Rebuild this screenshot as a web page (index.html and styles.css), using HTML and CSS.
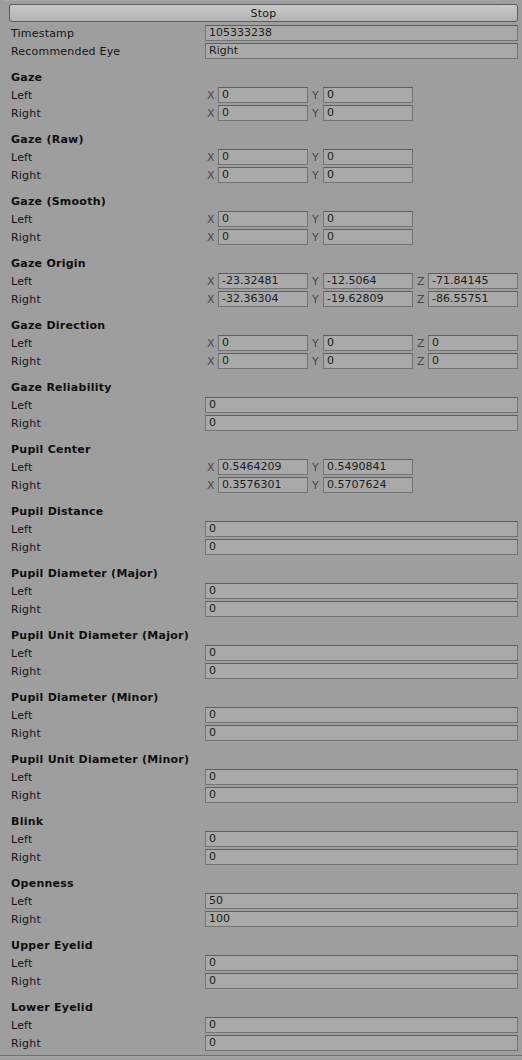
FILE: index.html
```html
<!DOCTYPE html>
<html lang="en">
<head>
    <meta charset="UTF-8">
    <title>Eye Tracking Data</title>
    <link rel="stylesheet" href="styles.css">
</head>
<body>
    <div class="inspector">
        <div class="top-strip"></div>
        <button class="stop-btn">Stop</button>

        <div class="row">
            <span class="label">Timestamp</span>
            <div class="field">105333238</div>
        </div>
        <div class="row">
            <span class="label">Recommended Eye</span>
            <div class="field">Right</div>
        </div>

        <div class="section">
            <div class="row header">Gaze</div>
            <div class="row">
                <span class="label">Left</span>
                <div class="vec">
                    <div class="comp"><span class="axis">X</span><div class="field">0</div></div>
                    <div class="comp"><span class="axis">Y</span><div class="field">0</div></div>
                </div>
            </div>
            <div class="row">
                <span class="label">Right</span>
                <div class="vec">
                    <div class="comp"><span class="axis">X</span><div class="field">0</div></div>
                    <div class="comp"><span class="axis">Y</span><div class="field">0</div></div>
                </div>
            </div>
        </div>

        <div class="section">
            <div class="row header">Gaze (Raw)</div>
            <div class="row">
                <span class="label">Left</span>
                <div class="vec">
                    <div class="comp"><span class="axis">X</span><div class="field">0</div></div>
                    <div class="comp"><span class="axis">Y</span><div class="field">0</div></div>
                </div>
            </div>
            <div class="row">
                <span class="label">Right</span>
                <div class="vec">
                    <div class="comp"><span class="axis">X</span><div class="field">0</div></div>
                    <div class="comp"><span class="axis">Y</span><div class="field">0</div></div>
                </div>
            </div>
        </div>

        <div class="section">
            <div class="row header">Gaze (Smooth)</div>
            <div class="row">
                <span class="label">Left</span>
                <div class="vec">
                    <div class="comp"><span class="axis">X</span><div class="field">0</div></div>
                    <div class="comp"><span class="axis">Y</span><div class="field">0</div></div>
                </div>
            </div>
            <div class="row">
                <span class="label">Right</span>
                <div class="vec">
                    <div class="comp"><span class="axis">X</span><div class="field">0</div></div>
                    <div class="comp"><span class="axis">Y</span><div class="field">0</div></div>
                </div>
            </div>
        </div>

        <div class="section">
            <div class="row header">Gaze Origin</div>
            <div class="row">
                <span class="label">Left</span>
                <div class="vec">
                    <div class="comp"><span class="axis">X</span><div class="field">-23.32481</div></div>
                    <div class="comp"><span class="axis">Y</span><div class="field">-12.5064</div></div>
                    <div class="comp"><span class="axis">Z</span><div class="field">-71.84145</div></div>
                </div>
            </div>
            <div class="row">
                <span class="label">Right</span>
                <div class="vec">
                    <div class="comp"><span class="axis">X</span><div class="field">-32.36304</div></div>
                    <div class="comp"><span class="axis">Y</span><div class="field">-19.62809</div></div>
                    <div class="comp"><span class="axis">Z</span><div class="field">-86.55751</div></div>
                </div>
            </div>
        </div>

        <div class="section">
            <div class="row header">Gaze Direction</div>
            <div class="row">
                <span class="label">Left</span>
                <div class="vec">
                    <div class="comp"><span class="axis">X</span><div class="field">0</div></div>
                    <div class="comp"><span class="axis">Y</span><div class="field">0</div></div>
                    <div class="comp"><span class="axis">Z</span><div class="field">0</div></div>
                </div>
            </div>
            <div class="row">
                <span class="label">Right</span>
                <div class="vec">
                    <div class="comp"><span class="axis">X</span><div class="field">0</div></div>
                    <div class="comp"><span class="axis">Y</span><div class="field">0</div></div>
                    <div class="comp"><span class="axis">Z</span><div class="field">0</div></div>
                </div>
            </div>
        </div>

        <div class="section">
            <div class="row header">Gaze Reliability</div>
            <div class="row"><span class="label">Left</span><div class="field">0</div></div>
            <div class="row"><span class="label">Right</span><div class="field">0</div></div>
        </div>

        <div class="section">
            <div class="row header">Pupil Center</div>
            <div class="row">
                <span class="label">Left</span>
                <div class="vec">
                    <div class="comp"><span class="axis">X</span><div class="field">0.5464209</div></div>
                    <div class="comp"><span class="axis">Y</span><div class="field">0.5490841</div></div>
                </div>
            </div>
            <div class="row">
                <span class="label">Right</span>
                <div class="vec">
                    <div class="comp"><span class="axis">X</span><div class="field">0.3576301</div></div>
                    <div class="comp"><span class="axis">Y</span><div class="field">0.5707624</div></div>
                </div>
            </div>
        </div>

        <div class="section">
            <div class="row header">Pupil Distance</div>
            <div class="row"><span class="label">Left</span><div class="field">0</div></div>
            <div class="row"><span class="label">Right</span><div class="field">0</div></div>
        </div>

        <div class="section">
            <div class="row header">Pupil Diameter (Major)</div>
            <div class="row"><span class="label">Left</span><div class="field">0</div></div>
            <div class="row"><span class="label">Right</span><div class="field">0</div></div>
        </div>

        <div class="section">
            <div class="row header">Pupil Unit Diameter (Major)</div>
            <div class="row"><span class="label">Left</span><div class="field">0</div></div>
            <div class="row"><span class="label">Right</span><div class="field">0</div></div>
        </div>

        <div class="section">
            <div class="row header">Pupil Diameter (Minor)</div>
            <div class="row"><span class="label">Left</span><div class="field">0</div></div>
            <div class="row"><span class="label">Right</span><div class="field">0</div></div>
        </div>

        <div class="section">
            <div class="row header">Pupil Unit Diameter (Minor)</div>
            <div class="row"><span class="label">Left</span><div class="field">0</div></div>
            <div class="row"><span class="label">Right</span><div class="field">0</div></div>
        </div>

        <div class="section">
            <div class="row header">Blink</div>
            <div class="row"><span class="label">Left</span><div class="field">0</div></div>
            <div class="row"><span class="label">Right</span><div class="field">0</div></div>
        </div>

        <div class="section">
            <div class="row header">Openness</div>
            <div class="row"><span class="label">Left</span><div class="field">50</div></div>
            <div class="row"><span class="label">Right</span><div class="field">100</div></div>
        </div>

        <div class="section">
            <div class="row header">Upper Eyelid</div>
            <div class="row"><span class="label">Left</span><div class="field">0</div></div>
            <div class="row"><span class="label">Right</span><div class="field">0</div></div>
        </div>

        <div class="section">
            <div class="row header">Lower Eyelid</div>
            <div class="row"><span class="label">Left</span><div class="field">0</div></div>
            <div class="row"><span class="label">Right</span><div class="field">0</div></div>
        </div>

        <div class="footer"></div>
    </div>
</body>
</html>
```

FILE: styles.css
```css
html, body {
    margin: 0;
    padding: 0;
    background: #9e9e9e;
}
body {
    font-family: 'DejaVu Sans', 'Liberation Sans', sans-serif;
    font-size: 11px;
    color: #141414;
}
.inspector {
    width: 522px;
    height: 1060px;
    overflow: hidden;
}
.top-strip {
    height: 1px;
    margin: 0 24px 0 4px;
    background: #a8a8a8;
}
.stop-btn {
    display: block;
    width: 509px;
    height: 18px;
    margin: 3px 0 2px 9px;
    padding: 0;
    border: 1px solid #5e5e5e;
    border-radius: 3px;
    background: linear-gradient(#c9c9c9, #b2b2b2);
    font-family: inherit;
    font-size: 11px;
    letter-spacing: 0.2px;
    color: #141414;
    line-height: 15px;
    text-align: center;
}
.row {
    display: grid;
    grid-template-columns: 194px 313px;
    align-items: center;
    height: 18px;
    padding-left: 11px;
}
.label {
    letter-spacing: 0.2px;
}
.row.header {
    display: block;
    box-sizing: border-box;
    padding-top: 1px;
    line-height: 18px;
    font-weight: bold;
    letter-spacing: 0.25px;
    color: #0e0e0e;
}
.section {
    margin-top: 8px;
}
.field {
    box-sizing: border-box;
    height: 16px;
    padding-left: 3px;
    border: 1px solid #737373;
    border-top-color: #5f5f5f;
    background: #a9a9a9;
    color: #1c1c1c;
    line-height: 14px;
    white-space: nowrap;
    overflow: hidden;
}
.vec {
    display: grid;
    grid-template-columns: repeat(3, 103px);
    column-gap: 2px;
}
.comp {
    display: flex;
    align-items: center;
}
.axis {
    width: 13px;
    flex: none;
    padding-left: 2px;
    box-sizing: border-box;
    color: #474747;
}
.comp .field {
    flex: 1;
}
.footer {
    margin-top: 3px;
    height: 2px;
    border-top: 1px solid #707070;
    background: #a4a4a4;
}
```
